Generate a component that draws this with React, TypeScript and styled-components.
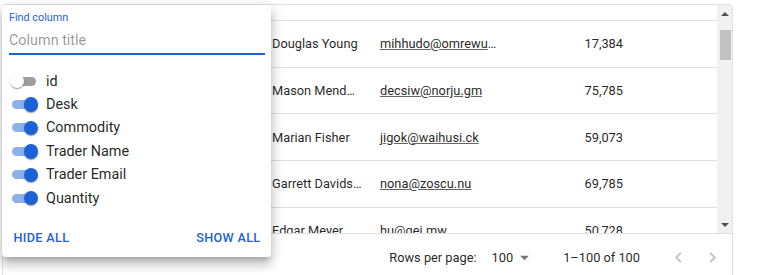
import React from "react";
import styled, { createGlobalStyle } from "styled-components";

const primary = "#1a62d6";
const text = "rgba(0, 0, 0, 0.87)";
const line = "#e0e0e0";

const GlobalStyle = createGlobalStyle`
  html, body {
    margin: 0;
    padding: 0;
    background: #fff;
    font-family: Roboto, "Liberation Sans", Arial, sans-serif;
    color: ${text};
  }
  * { box-sizing: border-box; }
`;

const Page = styled.div`
  position: relative;
  height: 275px;
  overflow: hidden;
  padding: 4px 46px 0 2px;
`;

const Grid = styled.div`
  border: 1px solid ${line};
  border-radius: 4px;
  display: flex;
  flex-direction: column;
`;

const Body = styled.div`
  display: flex;
  height: 228px;
`;

const Viewport = styled.div`
  flex: 1;
  overflow: hidden;
`;

const Row = styled.div<{ $h: number }>`
  display: flex;
  align-items: center;
  height: ${(p) => p.$h}px;
  border-bottom: 1px solid ${line};
  font-size: 12.8px;
`;

const Cell = styled.div<{ $w: number; $right?: boolean }>`
  width: ${(p) => p.$w}px;
  flex-shrink: 0;
  padding: 0 9px;
  white-space: nowrap;
  overflow: hidden;
  text-overflow: ellipsis;
  text-align: ${(p) => (p.$right ? "right" : "left")};
`;

const Link = styled.a`
  color: ${text};
  text-decoration: underline;
  text-decoration-color: rgba(0, 0, 0, 0.6);
`;

const Scrollbar = styled.div`
  width: 15px;
  background: #f1f1f1;
  display: flex;
  flex-direction: column;
  align-items: center;
  padding: 7px 0 6px 1px;
`;

const Thumb = styled.div`
  width: 11px;
  height: 30px;
  background: #c1c1c1;
  margin-top: 14px;
`;

const Arrow = styled.div<{ $down?: boolean }>`
  width: 0;
  height: 0;
  border-left: 4px solid transparent;
  border-right: 4px solid transparent;
  ${(p) =>
    p.$down
      ? `border-top: 4px solid #505050; margin-top: auto;`
      : `border-bottom: 4px solid #505050;`}
`;

const Footer = styled.div`
  border-top: 1px solid ${line};
  height: 47px;
  display: flex;
  align-items: center;
  justify-content: flex-end;
  font-size: 12.8px;
  padding-right: 3px;
`;

const FooterText = styled.span<{ $ml?: number }>`
  margin-left: ${(p) => p.$ml ?? 0}px;
`;

const Select = styled.div`
  display: flex;
  align-items: center;
  margin-left: 15px;
  gap: 1px;
`;

const IconBtn = styled.div<{ $ml?: number }>`
  width: 34px;
  height: 34px;
  display: flex;
  align-items: center;
  justify-content: center;
  margin-left: ${(p) => p.$ml ?? 0}px;
  color: rgba(0, 0, 0, 0.26);
`;

const Panel = styled.div`
  position: absolute;
  left: 2px;
  top: 5px;
  width: 269px;
  height: 252px;
  background: #fff;
  border-radius: 4px;
  box-shadow: 0px 5px 5px -3px rgba(0, 0, 0, 0.2),
    0px 8px 10px 1px rgba(0, 0, 0, 0.14), 0px 3px 14px 2px rgba(0, 0, 0, 0.12);
  display: flex;
  flex-direction: column;
`;

const PanelHeader = styled.div`
  padding: 7px 6px 0 7px;
`;

const FieldLabel = styled.div`
  font-size: 10.8px;
  line-height: 11px;
  color: ${primary};
`;

const Input = styled.input`
  display: block;
  width: 100%;
  margin-top: 4px;
  height: 28px;
  border: none;
  border-bottom: 2px solid ${primary};
  outline: none;
  padding: 0;
  font-family: inherit;
  font-size: 14.4px;
  color: ${text};
  caret-color: ${text};
  &::placeholder {
    color: rgba(0, 0, 0, 0.42);
  }
`;

const SwitchList = styled.div`
  padding: 14.5px 4px 0 4px;
  flex: 1;
`;

const SwitchRow = styled.label`
  display: flex;
  align-items: center;
  height: 23.4px;
  font-size: 14.4px;
  gap: 4px;
`;

const SwitchRoot = styled.span`
  position: relative;
  width: 36px;
  height: 21.6px;
  flex-shrink: 0;
`;

const Track = styled.span<{ $on: boolean }>`
  position: absolute;
  left: 6.3px;
  top: 6.3px;
  width: 23.4px;
  height: 9px;
  border-radius: 5px;
  background: ${(p) => (p.$on ? "#8cb0ea" : "#9e9e9e")};
`;

const Knob = styled.span<{ $on: boolean }>`
  position: absolute;
  top: 3.6px;
  left: ${(p) => (p.$on ? 18 : 3.6)}px;
  width: 14.4px;
  height: 14.4px;
  border-radius: 50%;
  background: ${(p) => (p.$on ? primary : "#fff")};
  box-shadow: 0px 2px 1px -1px rgba(0, 0, 0, 0.2),
    0px 1px 1px 0px rgba(0, 0, 0, 0.14), 0px 1px 3px 0px rgba(0, 0, 0, 0.12);
`;

const PanelFooter = styled.div`
  display: flex;
  justify-content: space-between;
  padding: 8px 6px 6px 7px;
`;

const TextButton = styled.button`
  background: none;
  border: none;
  padding: 0 4.5px;
  height: 27px;
  font-family: inherit;
  font-size: 12.6px;
  font-weight: 500;
  letter-spacing: 0.36px;
  color: ${primary};
  text-transform: uppercase;
`;

const rows = [
  { name: "Douglas Young", email: "mihhudo@omrewuv.ag", qty: "17,384" },
  { name: "Mason Mendoza", email: "decsiw@norju.gm", qty: "75,785" },
  { name: "Marian Fisher", email: "jigok@waihusi.ck", qty: "59,073" },
  { name: "Garrett Davidson", email: "nona@zoscu.nu", qty: "69,785" },
  { name: "Edgar Meyer", email: "hu@gei.mw", qty: "50,728" },
];

const columns = [
  { label: "id", on: false },
  { label: "Desk", on: true },
  { label: "Commodity", on: true },
  { label: "Trader Name", on: true },
  { label: "Trader Email", on: true },
  { label: "Quantity", on: true },
];

const ChevronLeft = () => (
  <svg width="21" height="21" viewBox="0 0 24 24" fill="currentColor">
    <path d="M15.41 16.59L10.83 12l4.58-4.59L14 6l-6 6 6 6 1.41-1.41z" />
  </svg>
);

const ChevronRight = () => (
  <svg width="21" height="21" viewBox="0 0 24 24" fill="currentColor">
    <path d="M8.59 16.59L13.17 12 8.59 7.41 10 6l6 6-6 6-1.41-1.41z" />
  </svg>
);

const DropDown = () => (
  <svg width="21" height="21" viewBox="0 0 24 24" fill="rgba(0,0,0,0.54)">
    <path d="M7 10l5 5 5-5z" />
  </svg>
);

export default function App() {
  return (
    <Page>
      <GlobalStyle />
      <Grid>
        <Body>
          <Viewport>
            <Row $h={16} />
            {rows.map((r) => (
              <Row $h={46.67} key={r.name}>
                <Cell $w={260} />
                <Cell $w={108}>{r.name}</Cell>
                <Cell $w={135}>
                  <Link>{r.email}</Link>
                </Cell>
                <Cell $w={126} $right>
                  {r.qty}
                </Cell>
              </Row>
            ))}
          </Viewport>
          <Scrollbar>
            <Arrow />
            <Thumb />
            <Arrow $down />
          </Scrollbar>
        </Body>
        <Footer>
          <FooterText>Rows per page:</FooterText>
          <Select>
            <span>100</span>
            <DropDown />
          </Select>
          <FooterText $ml={28}>1–100 of 100</FooterText>
          <IconBtn $ml={21}>
            <ChevronLeft />
          </IconBtn>
          <IconBtn>
            <ChevronRight />
          </IconBtn>
        </Footer>
      </Grid>
      <Panel>
        <PanelHeader>
          <FieldLabel>Find column</FieldLabel>
          <Input placeholder="Column title" autoFocus />
        </PanelHeader>
        <SwitchList>
          {columns.map((c) => (
            <SwitchRow key={c.label}>
              <SwitchRoot>
                <Track $on={c.on} />
                <Knob $on={c.on} />
              </SwitchRoot>
              {c.label}
            </SwitchRow>
          ))}
        </SwitchList>
        <PanelFooter>
          <TextButton>Hide all</TextButton>
          <TextButton>Show all</TextButton>
        </PanelFooter>
      </Panel>
    </Page>
  );
}
